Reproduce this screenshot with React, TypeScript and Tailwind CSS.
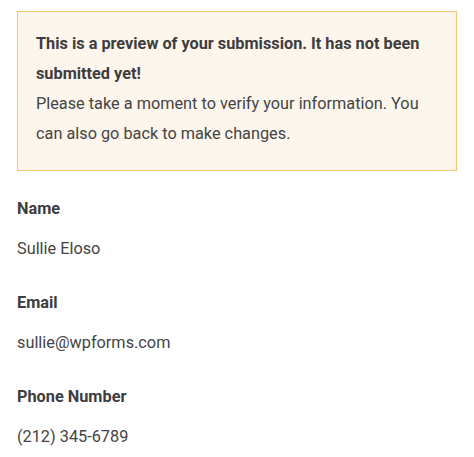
export default function App() {
  const fields = [
    { label: "Name", value: "Sullie Eloso" },
    { label: "Email", value: "sullie@wpforms.com" },
    { label: "Phone Number", value: "(212) 345-6789" },
  ];

  return (
    <div className="min-h-[457px] bg-white px-[17px] pt-[11px] font-['Roboto',sans-serif] text-[16.3px] text-[#444]">
      <div className="border-[1.5px] border-[#f4c871] bg-[#fdf6ec] pt-[17px] pr-[18px] pb-[21px] pl-[18px] leading-[30px]">
        <p className="font-bold text-[#3d3d3f]">
          This is a preview of your submission. It has not been submitted yet!
        </p>
        <p>Please take a moment to verify your information. You can also go back to make changes.</p>
      </div>

      <div className="mt-[23px] flex flex-col gap-[24px] leading-[30px]">
        {fields.map((field) => (
          <div key={field.label} className="flex flex-col gap-[10px]">
            <p className="font-bold text-[#3d3d3f]">{field.label}</p>
            <p>{field.value}</p>
          </div>
        ))}
      </div>
    </div>
  );
}
